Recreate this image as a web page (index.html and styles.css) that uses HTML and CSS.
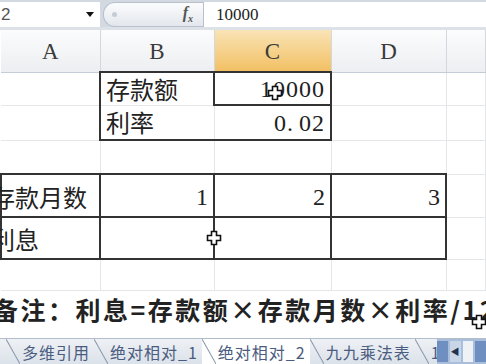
FILE: index.html
```html
<!DOCTYPE html>
<html lang="zh-CN">
<head>
    <meta charset="UTF-8">
    <title>存款利息</title>
    <link rel="stylesheet" href="styles.css">
</head>
<body>

    <div class="formula-bar">
        <div class="name-box"><span class="name">2</span><span class="drop"></span></div>
        <div class="fx-box"><span class="knob"></span><span class="fx">f<sub>x</sub></span></div>
        <div class="formula">10000</div>
    </div>

    <table class="sheet">
        <colgroup>
            <col class="col-a"><col class="col-b"><col class="col-c"><col class="col-d"><col>
        </colgroup>
        <tr class="head">
            <th>A</th><th>B</th><th class="active">C</th><th>D</th><th></th>
        </tr>
        <tr class="r1">
            <td></td>
            <td class="l t">存款额</td>
            <td class="box num">10000</td>
            <td></td><td></td>
        </tr>
        <tr class="r2">
            <td></td>
            <td class="l b">利率</td>
            <td class="r b num">0.<span class="dot-gap"></span>02</td>
            <td></td><td></td>
        </tr>
        <tr class="r3">
            <td></td><td></td><td></td><td></td><td></td>
        </tr>
        <tr class="r4">
            <td class="box cut">存款月数</td>
            <td class="box num">1</td>
            <td class="box num">2</td>
            <td class="box num">3</td>
            <td></td>
        </tr>
        <tr class="r5">
            <td class="box cut">利息</td>
            <td class="box"></td>
            <td class="box"></td>
            <td class="box"></td>
            <td></td>
        </tr>
        <tr class="r6">
            <td></td><td></td><td></td><td></td><td></td>
        </tr>
        <tr class="r7">
            <td class="note" colspan="5">备注：利息=存款额×存款月数×利率/12</td>
        </tr>
    </table>

    <div class="tabs">
        <div class="tab-strip">
            <div class="tab first"></div>
            <div class="tab">多维引用</div>
            <div class="tab">绝对相对_1</div>
            <div class="tab active">绝对相对_2</div>
            <div class="tab">九九乘法表</div>
            <div class="tab">1</div>
        </div>
        <div class="tab-nav">
            <span class="nav-btn dark"></span>
            <span class="nav-btn arrow">◀</span>
            <span class="nav-btn light"></span>
            <span class="nav-btn dark"></span>
        </div>
    </div>

    <!-- mouse pointers caught in the capture -->
    <svg class="cursor c1" width="16" height="16" viewBox="0 0 16 16"><path d="M5.5 1.5h5v4h4v5h-4v4h-5v-4h-4v-5h4z" fill="#fff" stroke="#111" stroke-width="1.6"/></svg>
    <svg class="cursor c2" width="16" height="16" viewBox="0 0 16 16"><path d="M5.5 1.5h5v4h4v5h-4v4h-5v-4h-4v-5h4z" fill="#fff" stroke="#111" stroke-width="1.6"/></svg>
    <svg class="cursor c3" width="16" height="16" viewBox="0 0 16 16"><path d="M5.5 1.5h5v4h4v5h-4v4h-5v-4h-4v-5h4z" fill="#fff" stroke="#111" stroke-width="1.6"/></svg>

</body>
</html>
```

FILE: styles.css
```css
body {

    margin: 0;
    width: 486px;
    height: 364px;
    overflow: hidden;
    position: relative;
    background-color: #fff;
    font-family: "Noto Sans CJK SC", sans-serif;
    color: #222;

}

/* formula bar */

.formula-bar {

    display: flex;
    height: 25px;
    padding-top: 2px;
    border-bottom: 3px solid #dde2e9;
    background-color: #d3d9e1;

}

.name-box {

    width: 100px;
    display: flex;
    align-items: center;
    justify-content: space-between;
    background-color: #fff;
    font-family: "Liberation Sans", sans-serif;
    font-size: 17px;
    color: #555;

}

.name {

    margin-left: 1px;

}

.drop {

    margin-right: 6px;
    border-left: 4px solid transparent;
    border-right: 4px solid transparent;
    border-top: 5px solid #111;

}

.fx-box {

    width: 100px;
    margin-left: 3px;
    display: flex;
    align-items: center;
    justify-content: space-between;
    border: 1px solid #b7c0cc;
    border-right: none;
    border-radius: 12px 0 0 12px;
    background: linear-gradient(#fbfcfd, #e3e7ed);
    box-sizing: border-box;

}

.knob {

    width: 5px;
    height: 5px;
    margin-left: 8px;
    border-radius: 50%;
    background-color: #c6ccd5;

}

.fx {

    margin-right: 10px;
    font-family: "Liberation Serif", serif;
    font-style: italic;
    font-weight: bold;
    font-size: 16px;
    color: #555;

}

.fx sub {

    font-size: 10px;

}

.formula {

    flex: 1;
    padding-left: 12px;
    border-left: 1px solid #b7c0cc;
    background-color: #fff;
    font-family: "Liberation Serif", serif;
    font-size: 17px;
    line-height: 25px;

}

/* grid */

.sheet {

    width: 486px;
    table-layout: fixed;
    border-collapse: collapse;

}

.col-a { width: 99px; }
.col-b { width: 114px; }
.col-c { width: 117px; }
.col-d { width: 115px; }

.sheet td, .sheet th {

    padding: 0 5px;
    border-right: 1px solid #e4e6e9;
    border-bottom: 1px solid #e4e6e9;
    white-space: nowrap;
    font-size: 24px;
    font-weight: normal;
    line-height: 26px;

}

.head {

    height: 42px;

}

.head th {

    background: linear-gradient(#fcfcfd, #eceef1);
    border-right: 1px solid #d3d8de;
    border-bottom: 1px solid #c4ccd6;
    font-family: "Liberation Serif", serif;
    font-size: 23px;
    color: #3b3b3b;
    text-align: center;
    padding-top: 3px;

}

.head th.active {

    background: linear-gradient(#f9e3b6, #f2c064);
    border-bottom: 1px solid #e9a83e;

}

.r1 { height: 33px; }
.r2 { height: 35px; }
.r3 { height: 34px; }
.r4 { height: 43px; }
.r5 { height: 42px; }
.r6 { height: 31px; }
.r7 { height: 48px; }

.r4 td, .r5 td {

    vertical-align: bottom;
    padding-bottom: 6px;

}

.num {

    text-align: right;
    font-family: "Liberation Serif", serif;

}

.r1 .num, .r2 .num {

    letter-spacing: 1px;

}

.dot-gap {

    display: inline-block;
    width: 5px;

}

.cut {

    text-indent: -16px;
    overflow: visible;

}

.sheet .l { border-left: 2px solid #333; }
.sheet .t { border-top: 2px solid #333; }
.sheet .r { border-right: 2px solid #333; }
.sheet .b { border-bottom: 2px solid #333; }
.sheet .box { border: 2px solid #333; }

.sheet .note {

    border: none;
    padding: 0;
    vertical-align: top;
    padding-top: 5px;
    text-indent: -8px;
    font-weight: bold;
    font-size: 25px;
    letter-spacing: 2.5px;

}

/* sheet tabs */

.tabs {

    display: flex;
    height: 26px;
    background-color: #d5dbe4;
    border-top: 1px solid #b3bdca;
    box-sizing: border-box;
    font-size: 16px;
    letter-spacing: 1px;
    color: #4a5c80;

}

.tab-strip {

    flex: 1;
    display: flex;
    overflow: hidden;

}

.tab {

    flex-shrink: 0;
    display: flex;
    align-items: center;
    white-space: nowrap;
    padding: 0 4px 0 16px;
    background:
        linear-gradient(to top right, transparent calc(50% - 1px), #8795aa 50%, transparent calc(50% + 1px)) left / 14px 100% no-repeat,
        linear-gradient(#eef1f5, #dce2ea);

}

.tab.first {

    width: 0;
    padding: 0 0 0 6px;
    background: linear-gradient(#eef1f5, #dce2ea);

}

.tab.active {

    background:
        linear-gradient(to top right, transparent calc(50% - 1px), #8795aa 50%, transparent calc(50% + 1px)) left / 14px 100% no-repeat,
        #fff;

}

.tab-nav {

    width: 49px;
    flex-shrink: 0;
    display: flex;
    align-items: stretch;
    gap: 2px;
    padding: 2px 0;
    background-color: #a9bedb;

}

.nav-btn {

    flex: 1;
    display: flex;
    align-items: center;
    justify-content: center;
    font-size: 9px;
    letter-spacing: 0;
    color: #23324f;

}

.nav-btn.dark {

    background-color: #6f8fc1;

}

.nav-btn.arrow {

    background-color: #c9d6e8;

}

.nav-btn.light {

    background-color: #eef2f7;

}

/* pointers */

.cursor {

    position: absolute;

}

.c1 { left: 267px; top: 85px; }
.c2 { left: 206px; top: 230px; }
.c3 { left: 471px; top: 314px; }
```
